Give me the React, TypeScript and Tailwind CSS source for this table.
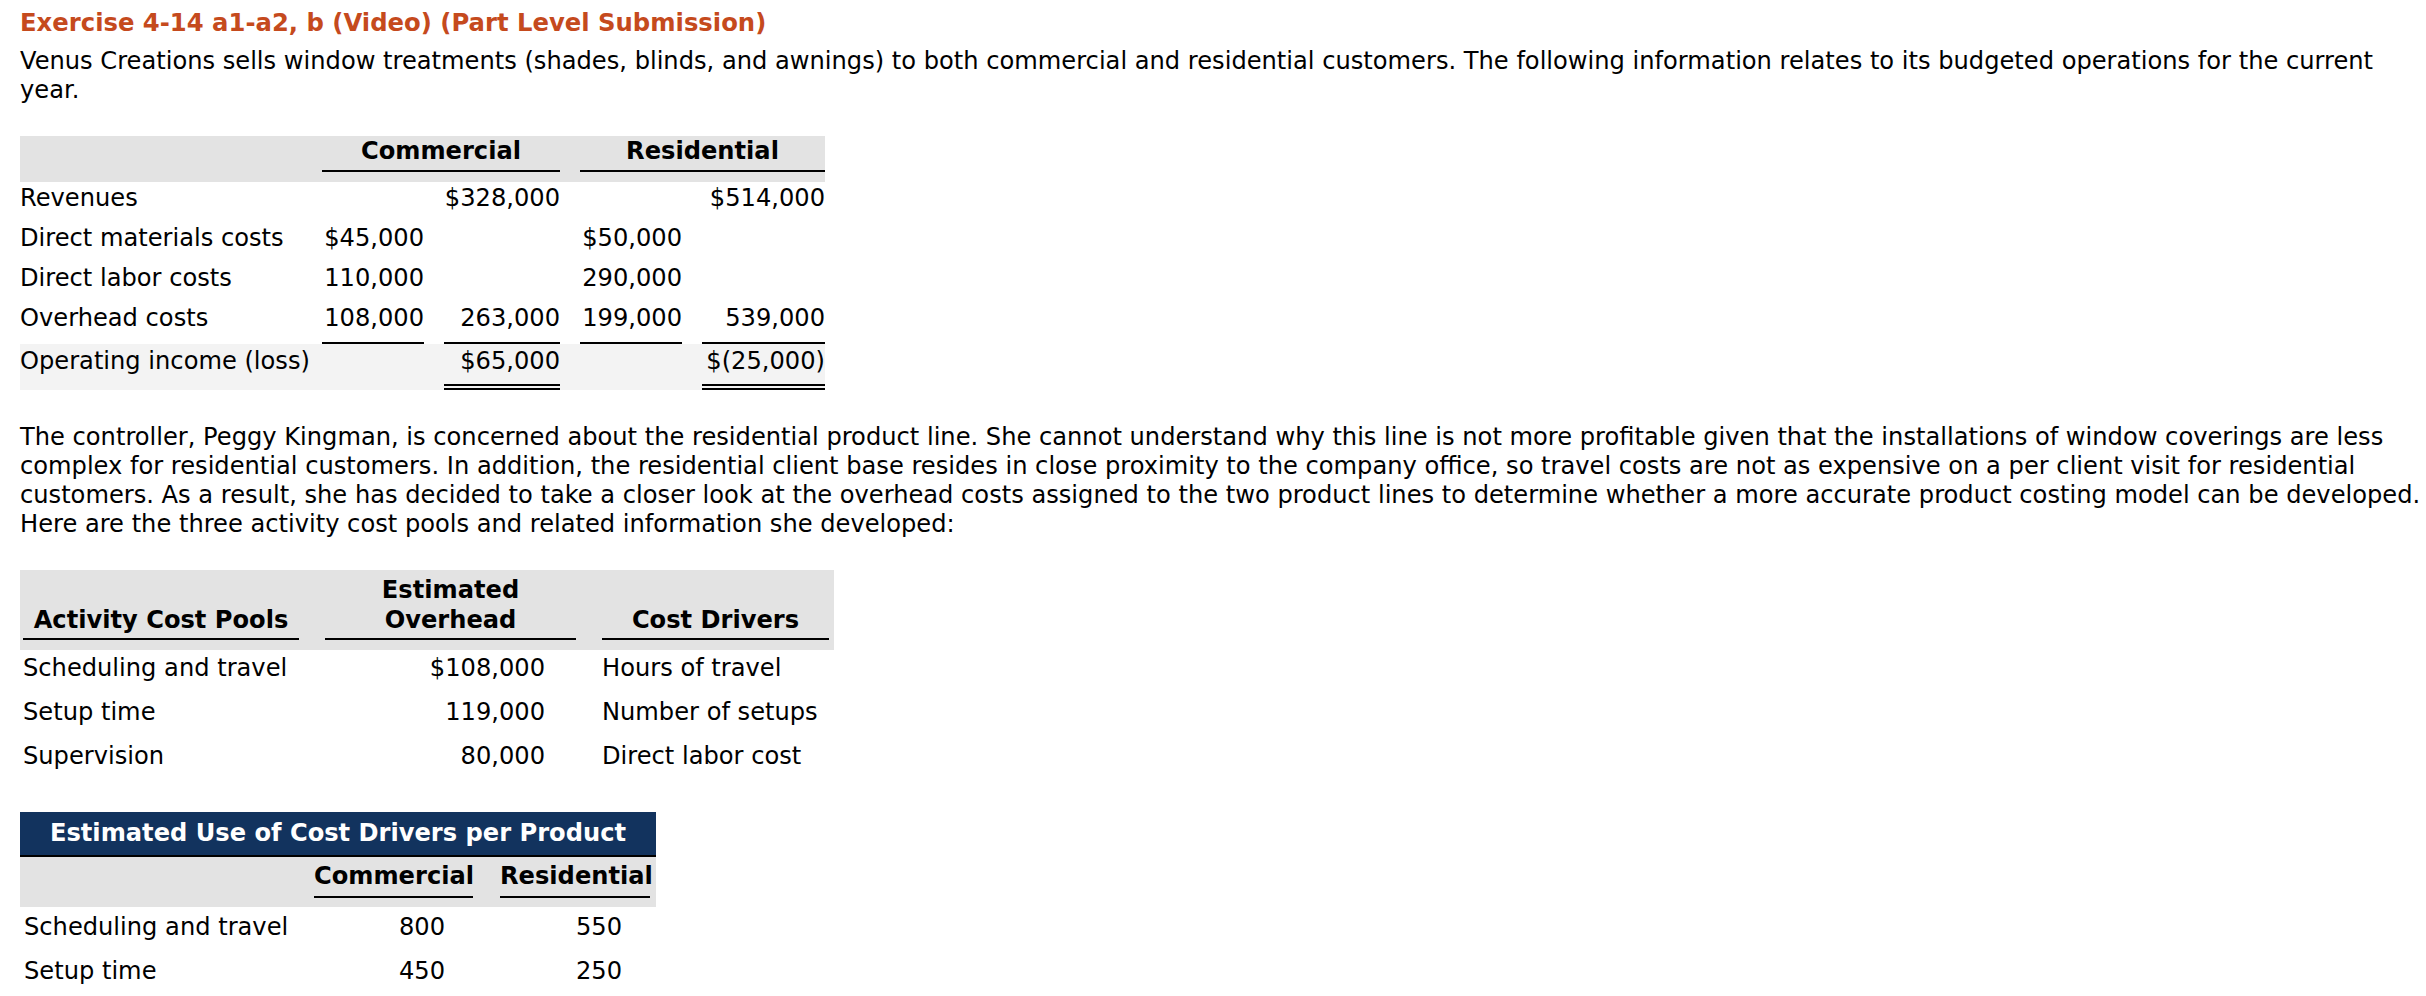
const intro = [
  "Venus Creations sells window treatments (shades, blinds, and awnings) to both commercial and residential customers. The following information relates to its budgeted operations for the current",
  "year.",
];

const controllerText = [
  "The controller, Peggy Kingman, is concerned about the residential product line. She cannot understand why this line is not more profitable given that the installations of window coverings are less",
  "complex for residential customers. In addition, the residential client base resides in close proximity to the company office, so travel costs are not as expensive on a per client visit for residential",
  "customers. As a result, she has decided to take a closer look at the overhead costs assigned to the two product lines to determine whether a more accurate product costing model can be developed.",
  "Here are the three activity cost pools and related information she developed:",
];

const budgetRows = [
  { label: "Revenues", c1: "", c2: "$328,000", r1: "", r2: "$514,000" },
  { label: "Direct materials costs", c1: "$45,000", c2: "", r1: "$50,000", r2: "" },
  { label: "Direct labor costs", c1: "110,000", c2: "", r1: "290,000", r2: "" },
];

const pools = [
  { name: "Scheduling and travel", amount: "$108,000", driver: "Hours of travel" },
  { name: "Setup time", amount: "119,000", driver: "Number of setups" },
  { name: "Supervision", amount: "80,000", driver: "Direct labor cost" },
];

const driverUse = [
  { name: "Scheduling and travel", commercial: "800", residential: "550" },
  { name: "Setup time", commercial: "450", residential: "250" },
];

const budgetCols = "grid grid-cols-[282px_102px_116px_102px_123px] gap-x-[20px] whitespace-nowrap";
const poolCols = "grid grid-cols-[276px_251px_227px] gap-x-[26px] pl-[3px] pr-[5px] whitespace-nowrap";
const useCols = "grid grid-cols-[263px_159px_150px] gap-x-[27px] pl-[4px] pr-[6px] whitespace-nowrap";

function BudgetTable() {
  return (
    <div className="mt-[31px] w-[805px]">
      {/* Header */}
      <div className={`${budgetCols} bg-[#e3e3e3] pt-px pb-[10px] font-bold`}>
        <div />
        <div className="col-span-2 border-b-2 border-black pb-[4px] text-center">Commercial</div>
        <div className="col-span-2 border-b-2 border-black pb-[4px] text-center">Residential</div>
      </div>

      {budgetRows.map((row) => (
        <div key={row.label} className={`${budgetCols} h-[40px] pt-[2px]`}>
          <div>{row.label}</div>
          <div className="text-right">{row.c1}</div>
          <div className="text-right">{row.c2}</div>
          <div className="text-right">{row.r1}</div>
          <div className="text-right">{row.r2}</div>
        </div>
      ))}

      {/* Overhead, underlined */}
      <div className={budgetCols}>
        <div className="border-b-2 border-transparent pt-[2px] pb-[9px]">Overhead costs</div>
        <div className="border-b-2 border-black pt-[2px] pb-[9px] text-right">108,000</div>
        <div className="border-b-2 border-black pt-[2px] pb-[9px] text-right">263,000</div>
        <div className="border-b-2 border-black pt-[2px] pb-[9px] text-right">199,000</div>
        <div className="border-b-2 border-black pt-[2px] pb-[9px] text-right">539,000</div>
      </div>

      {/* Operating income */}
      <div className={`${budgetCols} bg-[#f3f3f3]`}>
        <div className="border-b-[6px] border-transparent pt-[3px] pb-[8px]">Operating income (loss)</div>
        <div className="border-b-[6px] border-transparent pt-[3px] pb-[8px]" />
        <div className="border-b-[6px] border-double border-black pt-[3px] pb-[8px] text-right">$65,000</div>
        <div className="border-b-[6px] border-transparent pt-[3px] pb-[8px]" />
        <div className="border-b-[6px] border-double border-black pt-[3px] pb-[8px] text-right">$(25,000)</div>
      </div>
    </div>
  );
}

function PoolsTable() {
  return (
    <div className="mt-[31px] w-[814px]">
      <div className={`${poolCols} items-end bg-[#e3e3e3] pt-[5px] pb-[10px] font-bold leading-[30px]`}>
        <div className="border-b-2 border-black pb-[3px] text-center">Activity Cost Pools</div>
        <div className="border-b-2 border-black pb-[3px] text-center">
          Estimated
          <br />
          Overhead
        </div>
        <div className="border-b-2 border-black pb-[3px] text-center">Cost Drivers</div>
      </div>
      {pools.map((p) => (
        <div key={p.name} className={`${poolCols} h-[44px] pt-[4px]`}>
          <div>{p.name}</div>
          <div className="pr-[31px] text-right">{p.amount}</div>
          <div>{p.driver}</div>
        </div>
      ))}
    </div>
  );
}

function DriverUseTable() {
  return (
    <div className="mt-[30px] w-[636px]">
      <div className="flex h-[45px] items-center justify-center border-b-2 border-black bg-[#12335e] font-bold whitespace-nowrap text-white">
        Estimated Use of Cost Drivers per Product
      </div>
      <div className={`${useCols} bg-[#e3e3e3] pt-[5px] pb-[9px] font-bold`}>
        <div />
        <div className="border-b-2 border-black pb-[5px] text-center">Commercial</div>
        <div className="border-b-2 border-black pb-[5px] text-center">Residential</div>
      </div>
      {driverUse.map((d) => (
        <div key={d.name} className={`${useCols} h-[44px] pt-[6px]`}>
          <div>{d.name}</div>
          <div className="pr-[28px] text-right">{d.commercial}</div>
          <div className="pr-[28px] text-right">{d.residential}</div>
        </div>
      ))}
    </div>
  );
}

export default function App() {
  return (
    <div className="min-h-screen bg-white px-[20px] pt-[8px] font-['DejaVu_Sans',Verdana,sans-serif] text-[24.15px] leading-[29px] text-black">
      <h1 className="text-[24.3px] font-bold text-[#c54a1d]">Exercise 4-14 a1-a2, b (Video) (Part Level Submission)</h1>

      <div className="mt-[10px]">
        {intro.map((line) => (
          <div key={line} className="whitespace-nowrap">
            {line}
          </div>
        ))}
      </div>

      <BudgetTable />

      <div className="mt-[33px]">
        {controllerText.map((line) => (
          <div key={line} className="whitespace-nowrap">
            {line}
          </div>
        ))}
      </div>

      <PoolsTable />

      <DriverUseTable />
    </div>
  );
}
